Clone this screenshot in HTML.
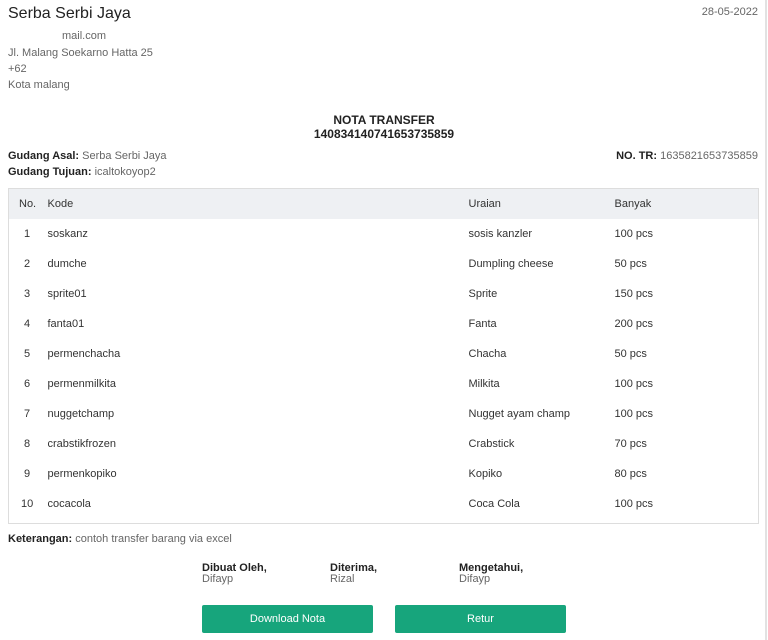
<!DOCTYPE html>
<html><head><style>
body{margin:0;width:768px;height:640px;background:#fff;font-family:"Liberation Sans",sans-serif;color:#222;position:relative;overflow:hidden}
.a{position:absolute;white-space:nowrap}
.g{color:#666;font-size:11px}
b{font-weight:bold;color:#222}
.vl{position:absolute;left:765px;top:0;width:2px;height:640px;background:#e2e2e2}
table{position:absolute;left:8px;top:188px;width:751px;border-collapse:collapse;border:1px solid #ddd;font-size:11px;color:#333}
td{height:30px;padding:0}
thead td{background:#eef0f3;height:30px}
.btn{position:absolute;top:605px;height:28px;width:171px;background:#17a57c;color:#fff;font-size:11px;text-align:center;line-height:28px;border-radius:2px}
</style></head><body>
<div class="vl"></div>
<div class="a" style="left:8px;top:5px;font-size:16px;color:#222">Serba Serbi Jaya</div>
<div class="a g" style="right:10px;top:6px">28-05-2022</div>
<div class="a g" style="left:62px;top:30px">mail.com</div>
<div class="a g" style="left:8px;top:47px">Jl. Malang Soekarno Hatta 25</div>
<div class="a g" style="left:8px;top:63px">+62</div>
<div class="a g" style="left:8px;top:79px">Kota malang</div>
<div class="a" style="left:0;width:768px;text-align:center;top:113px;font-size:12px;font-weight:bold;line-height:14px">NOTA TRANSFER<br>140834140741653735859</div>
<div class="a g" style="left:8px;top:150px"><b>Gudang Asal:</b> Serba Serbi Jaya</div>
<div class="a g" style="left:8px;top:166px"><b>Gudang Tujuan:</b> icaltokoyop2</div>
<div class="a g" style="right:10px;top:150px"><b>NO. TR:</b> 1635821653735859</div>
<table>
<colgroup><col style="width:39px"><col style="width:421px"><col style="width:146px"><col></colgroup>
<thead><tr><td style="padding-left:10px">No.</td><td>Kode</td><td>Uraian</td><td>Banyak</td></tr></thead>
<tbody>
<tr><td style="padding-left:15px">1</td><td>soskanz</td><td>sosis kanzler</td><td>100 pcs</td></tr>
<tr><td style="padding-left:15px">2</td><td>dumche</td><td>Dumpling cheese</td><td>50 pcs</td></tr>
<tr><td style="padding-left:15px">3</td><td>sprite01</td><td>Sprite</td><td>150 pcs</td></tr>
<tr><td style="padding-left:15px">4</td><td>fanta01</td><td>Fanta</td><td>200 pcs</td></tr>
<tr><td style="padding-left:15px">5</td><td>permenchacha</td><td>Chacha</td><td>50 pcs</td></tr>
<tr><td style="padding-left:15px">6</td><td>permenmilkita</td><td>Milkita</td><td>100 pcs</td></tr>
<tr><td style="padding-left:15px">7</td><td>nuggetchamp</td><td>Nugget ayam champ</td><td>100 pcs</td></tr>
<tr><td style="padding-left:15px">8</td><td>crabstikfrozen</td><td>Crabstick</td><td>70 pcs</td></tr>
<tr><td style="padding-left:15px">9</td><td>permenkopiko</td><td>Kopiko</td><td>80 pcs</td></tr>
<tr><td style="padding-left:12px">10</td><td>cocacola</td><td>Coca Cola</td><td>100 pcs</td></tr>
<tr><td colspan="4" style="height:4px"></td></tr>
</tbody></table>
<div class="a g" style="left:8px;top:533px"><b>Keterangan:</b> contoh transfer barang via excel</div>
<div class="a g" style="left:202px;top:563px;line-height:11px"><b>Dibuat Oleh,</b><br>Difayp</div>
<div class="a g" style="left:330px;top:563px;line-height:11px"><b>Diterima,</b><br>Rizal</div>
<div class="a g" style="left:459px;top:563px;line-height:11px"><b>Mengetahui,</b><br>Difayp</div>
<div class="btn" style="left:202px">Download Nota</div>
<div class="btn" style="left:395px">Retur</div>
</body></html>
